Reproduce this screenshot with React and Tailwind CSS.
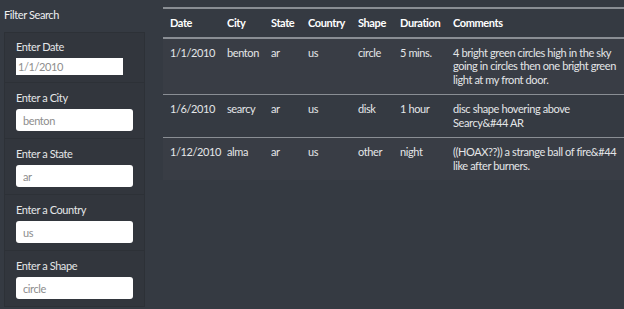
import React from "react";

const rows = [
  {
    date: "1/1/2010",
    city: "benton",
    state: "ar",
    country: "us",
    shape: "circle",
    duration: "5 mins.",
    comments: "4 bright green circles high in the sky going in circles then one bright green light at my front door.",
  },
  {
    date: "1/6/2010",
    city: "searcy",
    state: "ar",
    country: "us",
    shape: "disk",
    duration: "1 hour",
    comments: "disc shape hovering above Searcy&#44 AR",
  },
  {
    date: "1/12/2010",
    city: "alma",
    state: "ar",
    country: "us",
    shape: "other",
    duration: "night",
    comments: "((HOAX??)) a strange ball of fire&#44 like after burners.",
  },
];

const filters = [
  { label: "Enter a City", value: "benton" },
  { label: "Enter a State", value: "ar" },
  { label: "Enter a Country", value: "us" },
  { label: "Enter a Shape", value: "circle" },
];

export default function App() {
  return (
    <div
      className="w-[624px] h-[309px] overflow-hidden bg-[#353a42] text-[#e4e6e8] text-[11px] leading-[13.5px] tracking-[-0.4px] flex"
      style={{ fontFamily: "Lato, 'Open Sans', sans-serif" }}
    >
      {/* Sidebar */}
      <div className="w-[159px] shrink-0 pl-[4px] pt-[8px]">
        <div className="text-[#eef0f2] h-[24px]">Filter Search</div>
        <ul className="w-[141px] border border-[#2d3137] bg-[#32363d]">
          <li className="pt-[7px] pb-[7px] pl-[11px] border-b border-[#2d3137]">
            <div className="h-[13px] mb-[5px]">Enter Date</div>
            <input
              readOnly
              placeholder="1/1/2010"
              className="w-[107px] h-[17px] bg-white px-[2px] text-[11px] tracking-[-0.4px] placeholder:text-[#8d8d8d] outline-none"
            />
          </li>
          {filters.map((f, i) => (
            <li
              key={f.label}
              className={
                "pt-[8px] pb-[7px] pl-[11px] " +
                (i < filters.length - 1 ? "border-b border-[#2d3137]" : "")
              }
            >
              <div className="h-[13px] mb-[5px]">{f.label}</div>
              <input
                readOnly
                placeholder={f.value}
                className="w-[117px] h-[22px] bg-white rounded-[3px] px-[7px] text-[11px] tracking-[-0.4px] placeholder:text-[#8d8d8d] outline-none"
              />
            </li>
          ))}
        </ul>
      </div>

      {/* Table */}
      <div className="flex-1 pt-[7px] pl-[4px]">
        <table className="w-full table-fixed border-collapse text-left">
          <thead>
            <tr className="border-t-2 border-b-2 border-[#8a8e94]">
              <th className="w-[57px] px-[7px] py-[7px] font-bold text-white">Date</th>
              <th className="w-[44px] px-[7px] py-[7px] font-bold text-white">City</th>
              <th className="w-[37px] px-[7px] py-[7px] font-bold text-white">State</th>
              <th className="w-[50px] px-[7px] py-[7px] font-bold text-white">Country</th>
              <th className="w-[42px] px-[7px] py-[7px] font-bold text-white">Shape</th>
              <th className="w-[53px] px-[7px] py-[7px] font-bold text-white">Duration</th>
              <th className="px-[7px] py-[7px] font-bold text-white">Comments</th>
            </tr>
          </thead>
          <tbody>
            {rows.map((r, i) => (
              <tr
                key={r.date}
                className={
                  (i % 2 === 0 ? "bg-[#393d45] " : "bg-[#353a42] ") +
                  (i < rows.length - 1 ? "border-b border-[#8a8e94]" : "")
                }
              >
                <td className="px-[7px] pt-[7px] pb-[8px] align-top whitespace-nowrap">{r.date}</td>
                <td className="px-[7px] pt-[7px] pb-[8px] align-top">{r.city}</td>
                <td className="px-[7px] pt-[7px] pb-[8px] align-top">{r.state}</td>
                <td className="px-[7px] pt-[7px] pb-[8px] align-top">{r.country}</td>
                <td className="px-[7px] pt-[7px] pb-[8px] align-top">{r.shape}</td>
                <td className="px-[7px] pt-[7px] pb-[8px] align-top">{r.duration}</td>
                <td className="pl-[7px] pr-[3px] pt-[7px] pb-[8px] align-top">{r.comments}</td>
              </tr>
            ))}
          </tbody>
        </table>
      </div>
    </div>
  );
}
